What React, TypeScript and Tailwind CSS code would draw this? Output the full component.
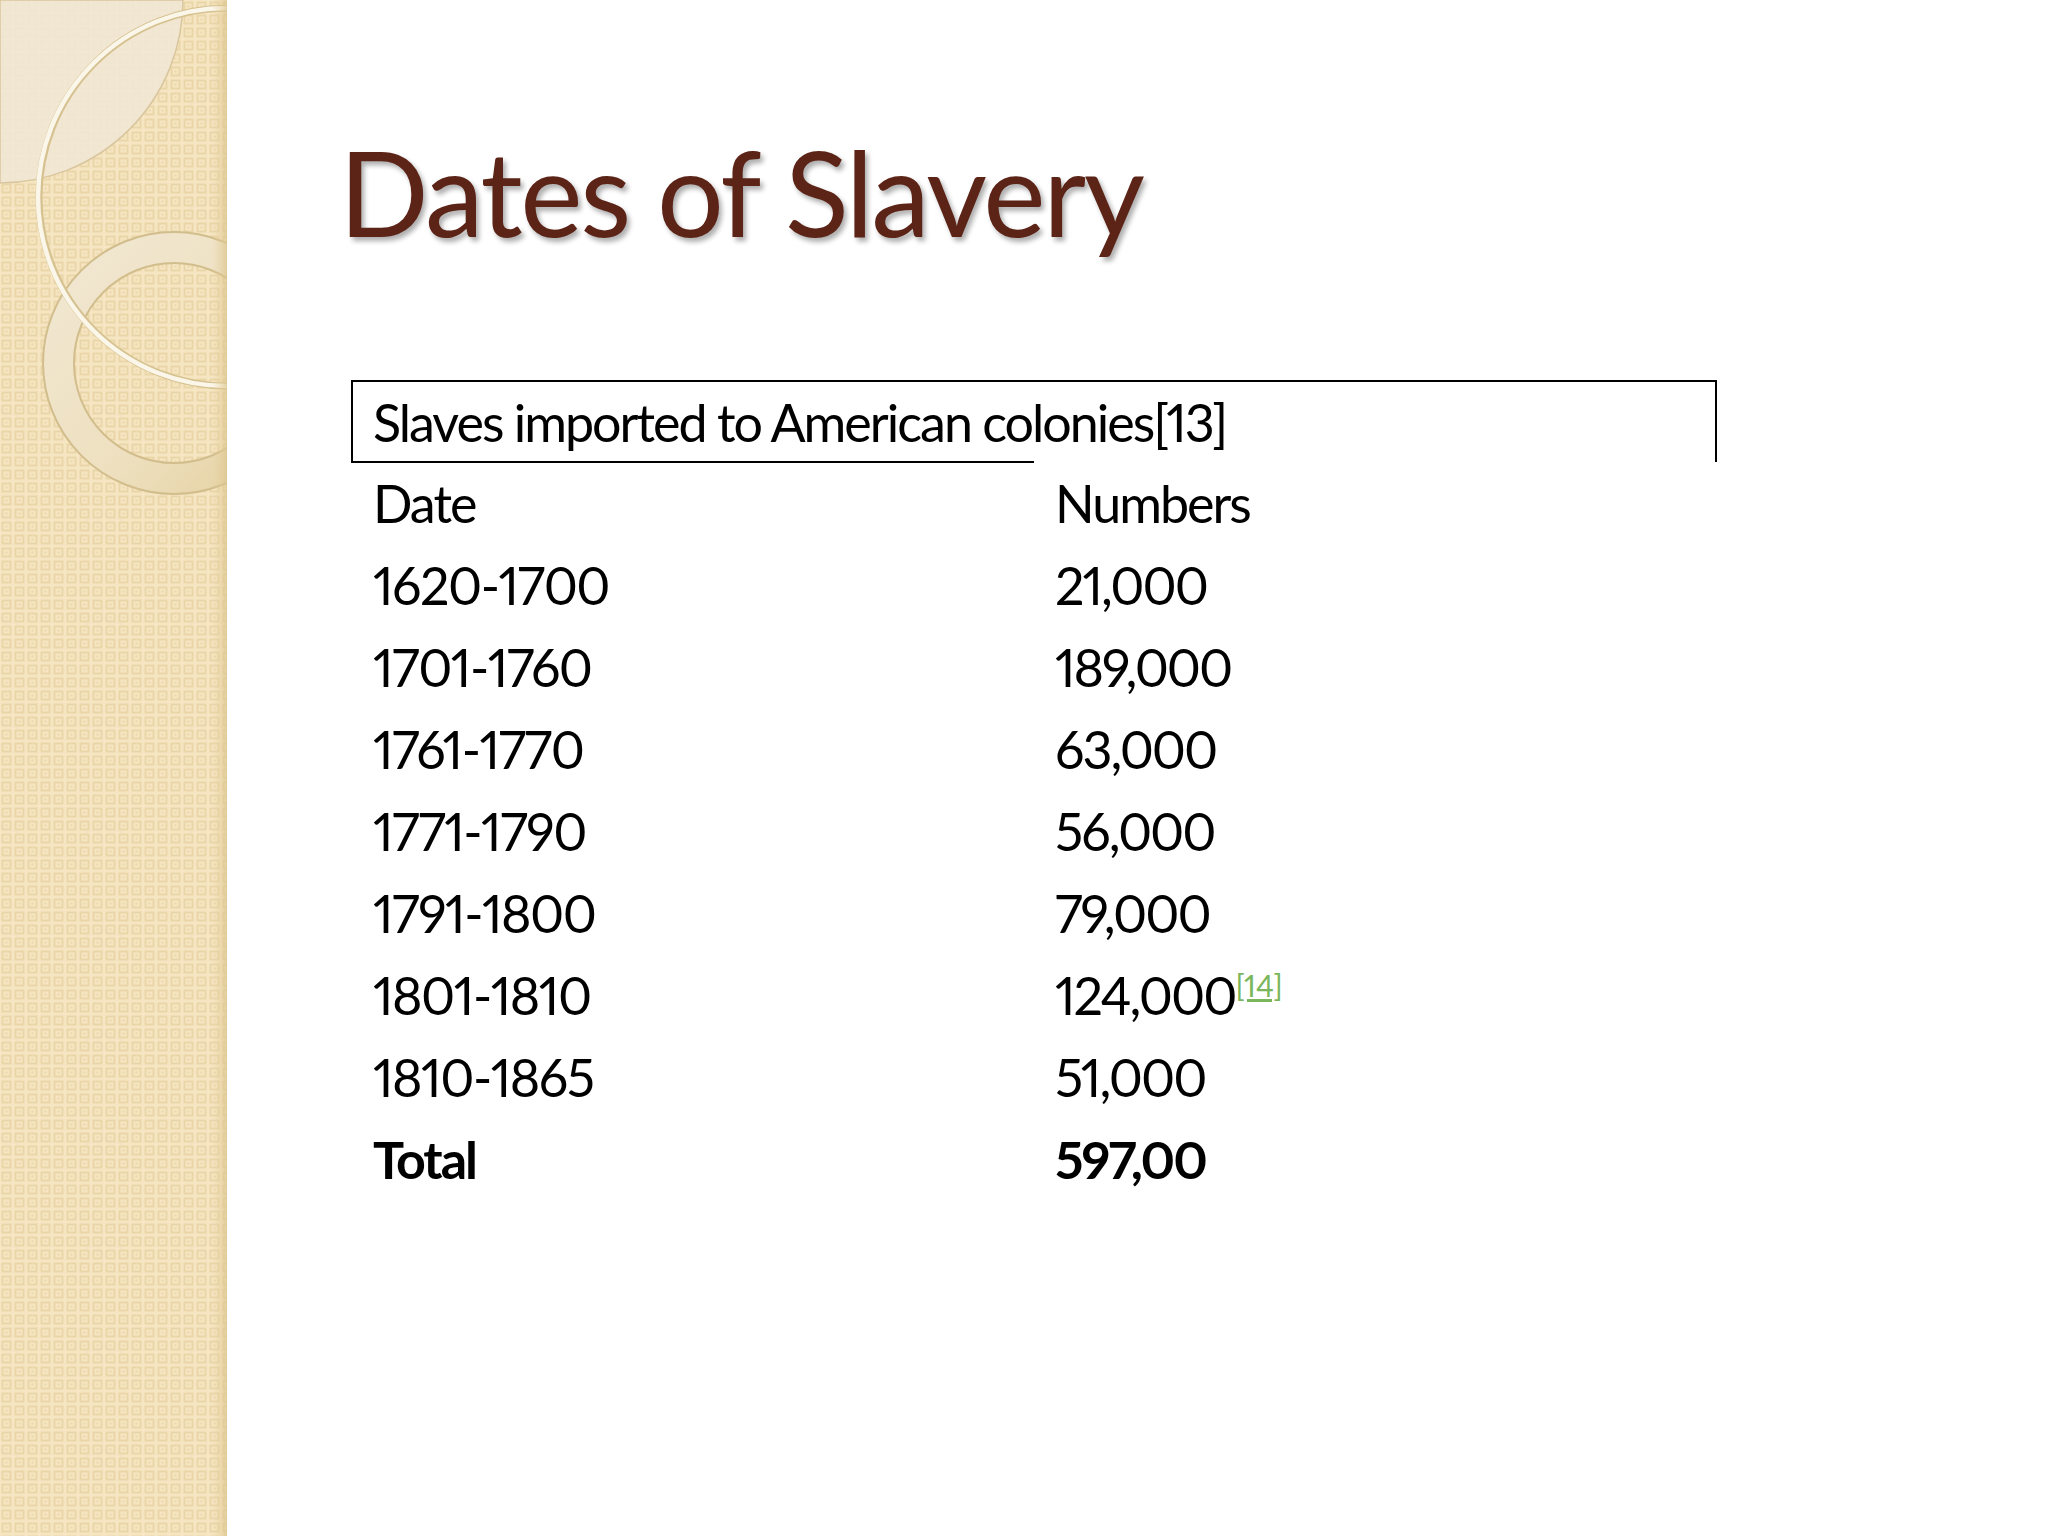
const rows: [string, string][] = [
  ["1620-1700", "21,000"],
  ["1701-1760", "189,000"],
  ["1761-1770", "63,000"],
  ["1771-1790", "56,000"],
  ["1791-1800", "79,000"],
  ["1801-1810", "124,000"],
  ["1810-1865", "51,000"],
];

function Sidebar() {
  return (
    <aside className="h-[1536px] w-[227px] shrink-0 bg-[#f4e3bd]">
      <svg width="227" height="1536" viewBox="0 0 227 1536" className="block">
        <defs>
          <pattern id="weave" width="13" height="13" patternUnits="userSpaceOnUse">
            <rect width="13" height="13" fill="#f5e5c1" />
            <rect x="2.5" y="2.5" width="8" height="8" fill="none" stroke="#e9d5a8" strokeWidth="1.8" />
            <rect x="5.5" y="5.5" width="2" height="2" fill="#ebd7ab" />
            <rect x="0" y="0" width="1" height="1" fill="#f8ebcd" />
          </pattern>
          <linearGradient id="edge" x1="0" x2="1" y1="0" y2="0">
            <stop offset="0" stopColor="#e5d09e" stopOpacity="0" />
            <stop offset="1" stopColor="#dcc48d" stopOpacity="0.75" />
          </linearGradient>
          <linearGradient id="ring" x1="0" x2="1" y1="0" y2="1">
            <stop offset="0" stopColor="#f1e7d2" />
            <stop offset="0.6" stopColor="#eee0bf" />
            <stop offset="1" stopColor="#e4d09f" />
          </linearGradient>
        </defs>
        <rect width="227" height="1536" fill="url(#weave)" />
        <path d="M0 0 H183 A183 183 0 0 1 0 183 Z" fill="#f1e8d6" fillOpacity="0.85" stroke="#d9c69e" strokeWidth="1.5" />
        <circle cx="174" cy="363" r="115.5" fill="none" stroke="#d2bd8c" strokeWidth="33" />
        <circle cx="174" cy="363" r="115.5" fill="none" stroke="url(#ring)" strokeWidth="29" />
        <circle cx="228" cy="197" r="189" fill="none" stroke="#d6c290" strokeWidth="7" />
        <circle cx="227" cy="197" r="189" fill="none" stroke="#fbf6ea" strokeWidth="4.5" />
        <rect x="212" y="0" width="15" height="1536" fill="url(#edge)" />
      </svg>
    </aside>
  );
}

export default function App() {
  return (
    <div className="flex h-[1536px] w-[2048px] overflow-hidden bg-white font-['Lato','Noto_Sans',sans-serif] text-black">
      <Sidebar />
      <main className="flex-1">
        <h1 className="ml-[112px] mt-[133px] text-[118px] leading-none tracking-[-2.3px] text-[#5c2317] [text-shadow:3px_4px_5px_rgba(0,0,0,0.32)]">
          Dates of Slavery
        </h1>

        <div className="ml-[124px] mt-[129px] w-[1366px] text-[52px] leading-none tracking-[-2px] proportional-nums">
          <div className="relative flex h-[82px] items-center border-x-2 border-t-2 border-black pl-[20px]">
            Slaves imported to American colonies[13]
            <div className="absolute -bottom-[1px] -left-[2px] h-[2px] w-[683px] bg-black" />
          </div>

          <div className="grid h-[82px] grid-cols-2 items-center">
            <div className="pl-[22px]">Date</div>
            <div className="pl-[21px]">Numbers</div>
          </div>

          {rows.map(([date, num]) => (
            <div key={date} className="grid h-[82px] grid-cols-2 items-center">
              <div className="pl-[22px] tracking-[-1.5px]">{date}</div>
              <div className="pl-[21px]">
                {num}
                {num === "124,000" && (
                  <span className="align-[18px] text-[30px] tracking-normal text-[#7ab65c] underline">[14]</span>
                )}
              </div>
            </div>
          ))}

          <div className="grid h-[82px] grid-cols-2 items-center font-bold">
            <div className="pl-[22px]">Total</div>
            <div className="pl-[21px]">597,00</div>
          </div>
        </div>
      </main>
    </div>
  );
}
